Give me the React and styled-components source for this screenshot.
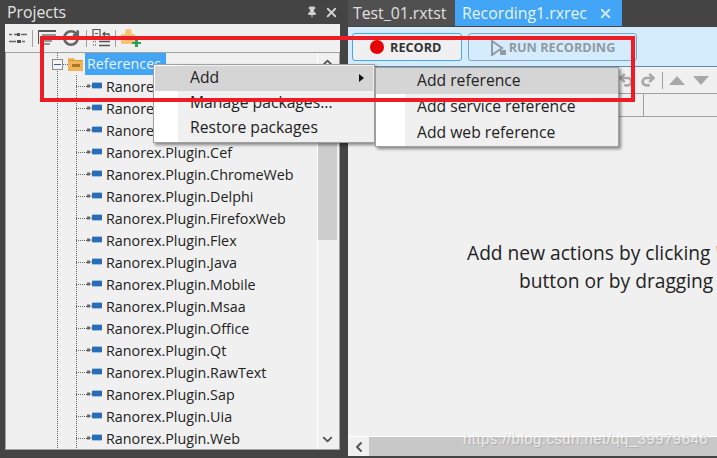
import React from 'react'
import styled, { createGlobalStyle } from 'styled-components'
import { X, Pin, ChevronUp, ChevronDown, ChevronLeft, RotateCw, Undo2, Redo2 } from 'lucide-react'

const GlobalStyle = createGlobalStyle`
  html, body { margin: 0; padding: 0; background: #444444; }
  body { width: 717px; height: 458px; overflow: hidden; font-family: "Open Sans", "Noto Sans", sans-serif; }
`

const plugins = ['Ranorex', 'Ranorex', 'Ranorex', 'Ranorex.Plugin.Cef', 'Ranorex.Plugin.ChromeWeb', 'Ranorex.Plugin.Delphi', 'Ranorex.Plugin.FirefoxWeb', 'Ranorex.Plugin.Flex', 'Ranorex.Plugin.Java', 'Ranorex.Plugin.Mobile', 'Ranorex.Plugin.Msaa', 'Ranorex.Plugin.Office', 'Ranorex.Plugin.Qt', 'Ranorex.Plugin.RawText', 'Ranorex.Plugin.Sap', 'Ranorex.Plugin.Uia', 'Ranorex.Plugin.Web']

const RefIcon = () => (
  <svg width="15" height="8" viewBox="0 0 15 8">
    <rect x="0" y="2.5" width="3" height="3" fill="#666" />
    <rect x="3" y="3.5" width="2" height="1" fill="#888" />
    <rect x="5" y="0" width="10" height="7" rx="1" fill="#9dc0e6" />
    <rect x="5" y="1" width="10" height="5" fill="#2b6cb5" />
  </svg>
)

const FolderIcon = () => (
  <svg width="15" height="13" viewBox="0 0 15 13">
    <path d="M0 0h6l1 2h8v11H0z" fill="#f2b45a" />
    <rect x="0" y="2" width="15" height="1" fill="#d9993f" />
    <rect x="4" y="6" width="8" height="3" fill="#a9772c" />
  </svg>
)

export default function App() {
  return (
    <Screen>
      <GlobalStyle />
      <LeftPanel>
        <PanelHead>
          <PanelTitle>Projects</PanelTitle>
          <Pin size={12} color="#d0d0d0" fill="#d0d0d0" />
          <X size={15} color="#d0d0d0" strokeWidth={3} />
        </PanelHead>
        <PanelToolbar>
          <svg width="18" height="16" viewBox="0 0 18 16">
            <path d="M0 4.5h3M5 4.5h3M12 4.5h6M0 11.5h7M13 11.5h3" stroke="#666" strokeWidth="1.5" />
            <rect x="8" y="3" width="3" height="3" fill="#555" />
            <rect x="8" y="10" width="4" height="3" fill="#555" />
          </svg>
          <ToolSep />
          <svg width="18" height="18" viewBox="0 0 18 18">
            <path d="M0 2h18M0 2v13" stroke="#555" strokeWidth="2" fill="none" />
            <path d="M4 6h14M4 9h12M4 12h10M4 15h8" stroke="#777" strokeWidth="1.5" fill="none" />
          </svg>
          <RefreshSlot>
            <RotateCw size={18} color="#666" strokeWidth={3.5} />
          </RefreshSlot>
          <ToolSep />
          <svg width="18" height="20" viewBox="0 0 18 20">
            <path d="M1 1.5h7v8H1zM3 5.5h3" stroke="#555" strokeWidth="1.2" fill="none" />
            <path d="M11 6h6v3M13 4l-2 2 2 2" stroke="#555" strokeWidth="1.3" fill="none" />
            <path d="M1 13.5h3M1 17h3" stroke="#777" strokeWidth="1.3" strokeDasharray="1 1" />
            <path d="M7 13.5h11M7 17.5h11" stroke="#555" strokeWidth="1.5" />
          </svg>
          <ToolSep />
          <svg width="20" height="20" viewBox="0 0 20 20">
            <path d="M0 6h4l1-5h5l1 5h3v10H0z" fill="#f9c373" />
            <path d="M14 11h3v3h3v2h-3v3h-3v-3h-3v-2h3z" fill="#2f9e57" />
          </svg>
        </PanelToolbar>
        <TreeBox>
          <Tree>
            <RootRow>
              <Expander />
              <Dots $width={5} />
              <FolderIcon />
              <RootLabel>References</RootLabel>
            </RootRow>
            <RowList>
              {plugins.map((name, i) => (
                <TreeRow key={i}>
                  <Dots $width={11} />
                  <RefIcon />
                  <RowLabel>{name}</RowLabel>
                </TreeRow>
              ))}
            </RowList>
          </Tree>
          <ScrollBar>
            <ChevronUp size={15} color="#555" strokeWidth={3} />
            <Thumb />
            <ChevronDown size={15} color="#555" strokeWidth={3} />
          </ScrollBar>
        </TreeBox>
      </LeftPanel>

      <RightPanel>
        <TabStrip>
          <Tab $width={107}>Test_01.rxtst</Tab>
          <Tab $width={167} $active>
            Recording1.rxrec
            <X size={15} color="#cfe8fb" strokeWidth={3} />
          </Tab>
        </TabStrip>
        <BlueBar>
          <RecordButton>
            <RecordDot />
            RECORD
          </RecordButton>
          <RunButton>
            <svg width="17" height="17" viewBox="0 0 17 17">
              <path d="M2 2l10 7-10 7z" fill="none" stroke="#8f9aa3" strokeWidth="2" />
              <rect x="10" y="11" width="6" height="5" fill="#8f9aa3" />
            </svg>
            RUN RECORDING
          </RunButton>
        </BlueBar>
        <ActionBar>
          <Undo2 size={16} color="#a8a8a8" strokeWidth={4} />
          <Redo2 size={16} color="#a8a8a8" strokeWidth={4} />
          <ToolSep />
          <ArrowUp />
          <ArrowDown />
        </ActionBar>
        <ColumnHead>
          <ColumnCell />
        </ColumnHead>
        <Canvas>
          <Hint>Add new actions by clicking '</Hint>
          <Hint>button or by dragging</Hint>
        </Canvas>
        <HScroll>
          <ScrollLeft>
            <ChevronLeft size={16} color="#555" strokeWidth={3} />
          </ScrollLeft>
        </HScroll>
      </RightPanel>

      <Menu $left={153} $top={64} $width={222} $gutter={24} $inset={1}>
        <MenuItem $active $row={25} $pad={35}>
          Add
          <SubArrow />
        </MenuItem>
        <MenuItem $row={25} $pad={35}>Manage packages...</MenuItem>
        <MenuItem $row={25} $pad={35}>Restore packages</MenuItem>
      </Menu>
      <Menu $left={375} $top={67} $width={244} $gutter={29} $inset={0}>
        <MenuItem $active $row={26} $pad={41}>Add reference</MenuItem>
        <MenuItem $row={26} $pad={41}>Add service reference</MenuItem>
        <MenuItem $row={26} $pad={41}>Add web reference</MenuItem>
      </Menu>
      <RedBox />
      <Watermark>https://blog.csdn.net/qq_39979646</Watermark>
    </Screen>
  )
}

const Screen = styled.div`
  position: relative;
  width: 717px;
  height: 458px;
  display: flex;
  overflow: hidden;
  background: #444444;
`

const LeftPanel = styled.div`
  width: 348px;
  display: flex;
  flex-direction: column;
  padding: 0 8px 8px 5px;
  box-sizing: border-box;
`

const PanelHead = styled.div`
  height: 24px;
  display: flex;
  align-items: center;
  gap: 6px;
  padding-right: 1px;
`

const PanelTitle = styled.div`
  flex: 1;
  font-size: 15.8px;
  color: #e4e4e4;
  padding-left: 2px;
`

const PanelToolbar = styled.div`
  height: 28px;
  background: #f0f0f0;
  display: flex;
  align-items: center;
  gap: 5px;
  padding-left: 4px;
`

const RefreshSlot = styled.div`
  width: 20px;
  display: flex;
  justify-content: center;
`

const ToolSep = styled.div`
  width: 1px;
  height: 17px;
  background: #a0a0a0;
`

const TreeBox = styled.div`
  flex: 1;
  min-height: 0;
  display: flex;
  background: #f0f0f0;
  border: 1px solid #a0a0a0;
  box-sizing: border-box;
`

const dotted = 'repeating-linear-gradient(to bottom, #666 0 1px, transparent 1px 2px)'

const Tree = styled.div`
  flex: 1;
  padding-left: 46px;
  overflow: hidden;
  background: ${dotted} 51px 0 / 1px 100% no-repeat;
`

const RootRow = styled.div`
  height: 22px;
  display: flex;
  align-items: center;
`

const Dots = styled.span`
  flex: none;
  width: ${p => p.$width}px;
  height: 1px;
  background: repeating-linear-gradient(to right, #666 0 1px, transparent 1px 2px);
`

const Expander = styled.div`
  flex: none;
  width: 11px;
  height: 11px;
  box-sizing: border-box;
  border: 1px solid #8a8a8a;
  background: linear-gradient(#3a5f9c, #3a5f9c) center / 7px 1px no-repeat, #f4f4f4;
`

const RootLabel = styled.div`
  flex: none;
  width: 81px;
  height: 22px;
  margin-left: 2px;
  padding-left: 2px;
  box-sizing: border-box;
  background: #42a5f5;
  color: #e8f4fe;
  font-size: 14.3px;
  line-height: 21px;
`

const RowList = styled.div`
  background: ${dotted} 24px 0 / 1px 100% no-repeat;
`

const TreeRow = styled.div`
  height: 22px;
  display: flex;
  align-items: center;
  padding-left: 24px;
`

const RowLabel = styled.div`
  margin-left: 4px;
  font-size: 14.3px;
  line-height: 21px;
  color: #222222;
  white-space: nowrap;
`

const ScrollBar = styled.div`
  flex: none;
  width: 22px;
  box-sizing: border-box;
  border-left: 1px solid #ffffff;
  display: flex;
  flex-direction: column;
  align-items: flex-start;
  padding: 2px 0 2px 2px;
`

const Thumb = styled.div`
  width: 19px;
  height: 170px;
  margin: 0 0 auto -2px;
  background: #cdcdcd;
`

const RightPanel = styled.div`
  flex: 1;
  min-width: 0;
  display: flex;
  flex-direction: column;
  padding-bottom: 2px;
`

const TabStrip = styled.div`
  height: 26px;
  display: flex;
  margin-bottom: 1px;
`

const Tab = styled.div`
  width: ${p => p.$width}px;
  box-sizing: border-box;
  display: flex;
  align-items: center;
  gap: 11px;
  padding-left: ${p => (p.$active ? 7 : 5)}px;
  font-size: 15.8px;
  color: ${p => (p.$active ? '#e8f4fe' : '#e0e0e0')};
  background: ${p => (p.$active ? '#42a5f5' : '#505050')};
`

const BlueBar = styled.div`
  height: 40px;
  box-sizing: border-box;
  background: #d5ecfd;
  border-bottom: 1px solid #5d8bab;
  display: flex;
  align-items: flex-start;
  gap: 6px;
  padding: 6px 0 0 4px;
`

const RecordButton = styled.div`
  width: 110px;
  height: 28px;
  box-sizing: border-box;
  display: flex;
  align-items: center;
  gap: 6px;
  padding-left: 17px;
  background: #f0f0f0;
  border: 1px solid #42a5f5;
  border-radius: 3px;
  font-size: 12.7px;
  font-weight: 700;
  color: #333;
`

const RecordDot = styled.span`
  width: 14px;
  height: 14px;
  border-radius: 50%;
  background: #e60000;
`

const RunButton = styled.div`
  width: 169px;
  height: 28px;
  box-sizing: border-box;
  display: flex;
  align-items: center;
  justify-content: center;
  gap: 2px;
  border: 1px solid #7fa6c4;
  border-radius: 3px;
  font-size: 12.7px;
  font-weight: 700;
  color: #8f9aa3;
`

const ActionBar = styled.div`
  height: 26px;
  background: #f0f0f0;
  display: flex;
  align-items: center;
  gap: 6px;
  padding-left: 270px;
`

const ArrowUp = styled.span`
  border-left: 8px solid transparent;
  border-right: 8px solid transparent;
  border-bottom: 9px solid #a8a8a8;
`

const ArrowDown = styled.span`
  margin-left: 2px;
  border-left: 8px solid transparent;
  border-right: 8px solid transparent;
  border-top: 9px solid #a8a8a8;
`

const ColumnHead = styled.div`
  height: 24px;
  background: #f0f0f0;
  border-top: 1px solid #a0a0a0;
  border-bottom: 1px solid #a0a0a0;
  box-sizing: border-box;
`

const ColumnCell = styled.div`
  width: 296px;
  height: 100%;
  box-sizing: border-box;
  border-right: 1px solid #a0a0a0;
`

const Canvas = styled.div`
  flex: 1;
  min-height: 0;
  background: #f0f0f0;
  padding: 122px 0 0 119px;
  overflow: hidden;
  white-space: nowrap;
`

const Hint = styled.div`
  font-size: 19.2px;
  line-height: 28px;
  color: #222222;
  &:last-child { padding-left: 52px; }
`

const HScroll = styled.div`
  height: 20px;
  flex: none;
  background: #c8c8c8;
  border-top: 1px solid #ffffff;
  display: flex;
  box-sizing: border-box;
`

const ScrollLeft = styled.div`
  width: 21px;
  background: #f0f0f0;
  display: flex;
  align-items: center;
  justify-content: center;
`

const Menu = styled.div`
  position: absolute;
  left: ${p => p.$left}px;
  top: ${p => p.$top}px;
  width: ${p => p.$width}px;
  box-sizing: border-box;
  padding: ${p => p.$inset}px;
  border: 1px solid #a0a0a0;
  background: linear-gradient(to right, #ffffff ${p => p.$gutter}px, #f0f0f0 ${p => p.$gutter}px);
  box-shadow: 2px 2px 3px rgba(0, 0, 0, 0.45);
`

const MenuItem = styled.div`
  position: relative;
  height: ${p => p.$row}px;
  line-height: ${p => p.$row - 2}px;
  padding-left: ${p => p.$pad}px;
  font-size: 15.7px;
  color: #222222;
  background: ${p => (p.$active ? '#d5d5d5' : 'transparent')};
`

const SubArrow = styled.span`
  position: absolute;
  right: 9px;
  top: 8px;
  border-left: 5px solid #111;
  border-top: 4px solid transparent;
  border-bottom: 4px solid transparent;
`

const RedBox = styled.div`
  position: absolute;
  left: 40px;
  top: 36px;
  width: 595px;
  height: 66px;
  box-sizing: border-box;
  border: 4px solid #ee1c25;
`

const Watermark = styled.div`
  position: absolute;
  left: 463px;
  top: 430px;
  font-family: "Liberation Sans", sans-serif;
  font-size: 15px;
  letter-spacing: 0.45px;
  white-space: nowrap;
  color: rgba(255, 255, 255, 0.72);
  text-shadow: 1px 1px 1px rgba(0, 0, 0, 0.15);
`
